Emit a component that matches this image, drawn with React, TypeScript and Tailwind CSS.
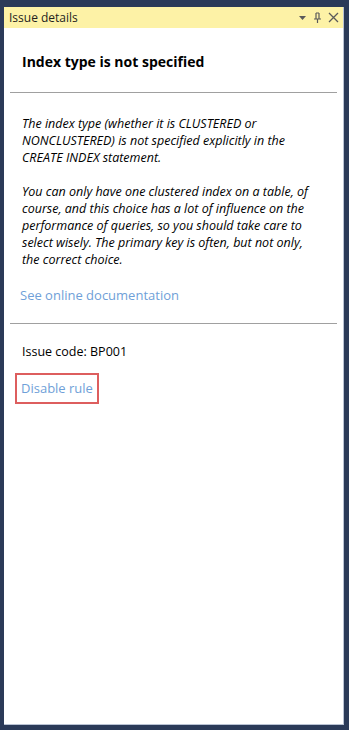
import React from "react";

export default function App() {
  return (
    <div
      className="w-[349px] h-[730px] bg-[#2b3a58] pl-[4px] pr-[5px] pt-[7px] pb-[5px] flex"
      style={{ fontFamily: '"Open Sans", "Noto Sans", sans-serif' }}
    >
      <div className="flex-1 flex flex-col bg-white border-r border-b border-[#b9c2d3]">
        <div className="h-[21px] bg-[#fdf2a6] flex items-center pl-[5px] pr-[4px] text-[12px] text-[#1e1e1e]">
          <span className="flex-1">Issue details</span>
          <svg width="9" height="6" viewBox="0 0 9 6" className="mr-[6px]">
            <path d="M1 1 H8 L4.5 5 Z" fill="#5a5a5a" />
          </svg>
          <svg width="9" height="12" viewBox="0 0 9 12" className="mr-[6px]">
            <path d="M3 1 V7 M6 1 V7 M3 1 H6 M1 7 H8 M4.5 7 V11" stroke="#5a5a5a" strokeWidth="1.2" fill="none" />
          </svg>
          <svg width="11" height="11" viewBox="0 0 11 11">
            <path d="M1 1 L10 10 M10 1 L1 10" stroke="#5a5a5a" strokeWidth="1.3" />
          </svg>
        </div>
        <div className="px-[6px]">
          <div className="pl-[12px] pt-[23px] pb-[20px] text-[14px] font-bold text-black">
            Index type is not specified
          </div>
          <div className="h-px bg-[#a0a0a0]" />
          <div className="pl-[12px] pr-[16px] pt-[22px] text-[12.5px] italic leading-[17px] text-black">
            <p>
              The index type (whether it is CLUSTERED or NONCLUSTERED) is not specified explicitly in the CREATE INDEX
              statement.
            </p>
            <p className="mt-[17px]">
              You can only have one clustered index on a table, of course, and this choice has a lot of influence on the
              performance of queries, so you should take care to select wisely. The primary key is often, but not only,
              the correct choice.
            </p>
          </div>
          <div className="pl-[10px] pt-[18px] pb-[19px] text-[13px] text-[#6f9fd8] leading-[18px]">
            See online documentation
          </div>
          <div className="h-px bg-[#a0a0a0]" />
          <div className="pl-[12px] pt-[19px] text-[12.5px] text-black leading-[17px]">Issue code: BP001</div>
          <div className="mt-[13px] ml-[5px] w-[84px] h-[31px] border-2 border-[#dd5e5e] flex items-center pl-[4px] text-[13px] text-[#6f9fd8]">
            Disable rule
          </div>
        </div>
      </div>
    </div>
  );
}
